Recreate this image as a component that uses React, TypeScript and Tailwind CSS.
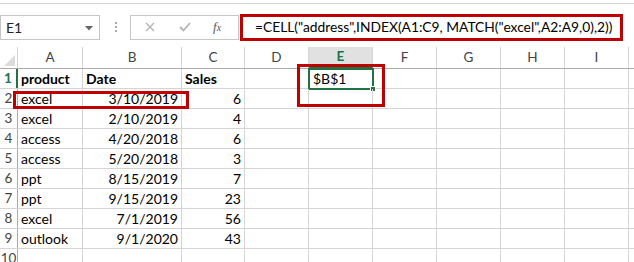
import React from 'react';

const COLS = ['A', 'B', 'C', 'D', 'E', 'F', 'G', 'H', 'I', ''];
const WIDTHS = [65, 99, 63, 64, 64, 64, 64, 64, 64, 40];

type Cell = { v: string; right?: boolean; bold?: boolean };

const DATA: Cell[][] = [
  [{ v: 'product', bold: true }, { v: 'Date', bold: true }, { v: 'Sales', bold: true }],
  [{ v: 'excel' }, { v: '3/10/2019', right: true }, { v: '6', right: true }],
  [{ v: 'excel' }, { v: '2/10/2019', right: true }, { v: '4', right: true }],
  [{ v: 'access' }, { v: '4/20/2018', right: true }, { v: '6', right: true }],
  [{ v: 'access' }, { v: '5/20/2018', right: true }, { v: '3', right: true }],
  [{ v: 'ppt' }, { v: '8/15/2019', right: true }, { v: '7', right: true }],
  [{ v: 'ppt' }, { v: '9/15/2019', right: true }, { v: '23', right: true }],
  [{ v: 'excel' }, { v: '7/1/2019', right: true }, { v: '56', right: true }],
  [{ v: 'outlook' }, { v: '9/1/2020', right: true }, { v: '43', right: true }],
  [],
];

const font = { fontFamily: 'Lato, "Liberation Sans", sans-serif' };

export default function App() {
  return (
    <div className="relative w-[634px] h-[262px] overflow-hidden bg-white text-black" style={font}>
      {/* top strip */}
      <div className="h-[4px] border-b border-[#d5d5d5]" />

      {/* name box + formula bar */}
      <div className="flex items-center h-[26px] mt-[10px]">
        <div className="relative flex items-center w-[100px] h-[25px] border border-[#c6c6c6] pl-[5px] text-[14px] text-[#222]">
          E1
          <svg className="absolute right-[6px] top-[10px]" width="8" height="5" viewBox="0 0 8 5">
            <path d="M0 0 H8 L4 4.5 Z" fill="#666" />
          </svg>
        </div>
        <div className="ml-[15px] flex flex-col gap-[2px]">
          <div className="w-[2px] h-[2px] bg-[#aaa]" />
          <div className="w-[2px] h-[2px] bg-[#aaa]" />
          <div className="w-[2px] h-[2px] bg-[#aaa]" />
        </div>
        <div className="ml-[13px] flex items-center w-[109px] h-[25px] border border-[#c6c6c6]">
          <svg className="ml-[14px]" width="10" height="10" viewBox="0 0 10 10">
            <path d="M1 1 L9 9 M9 1 L1 9" stroke="#b4b4b4" strokeWidth="1.4" />
          </svg>
          <svg className="ml-[24px]" width="12" height="10" viewBox="0 0 12 10">
            <path d="M1 5 L4.5 8.5 L11 1" stroke="#b4b4b4" strokeWidth="1.8" fill="none" />
          </svg>
          <span
            className="ml-[22px] text-[13px] italic text-[#555]"
            style={{ fontFamily: '"Liberation Serif", serif' }}
          >
            f<span className="text-[10px]">x</span>
          </span>
        </div>
        <div className="ml-[1px] flex items-center w-[383px] h-[27px] border-[3px] border-[#c00000] pl-[12px] text-[13.8px] whitespace-nowrap">
          =CELL("address",INDEX(A1:C9, MATCH("excel",A2:A9,0),2))
        </div>
      </div>

      {/* sheet */}
      <div className="mt-[7px]">
        {/* column headers */}
        <div className="flex h-[22px] border-b border-[#ababab]">
          <div className="relative w-[18px] shrink-0 border-r border-[#d4d4d4]">
            <svg className="absolute right-[2px] bottom-[2px]" width="11" height="11" viewBox="0 0 11 11">
              <path d="M11 0 V11 H0 Z" fill="#dcdcdc" />
            </svg>
          </div>
          {COLS.map((c, i) => (
            <div
              key={i}
              className={`shrink-0 flex items-center justify-center border-r border-[#d4d4d4] text-[13.5px] ${
                c === 'E' ? 'bg-[#e1e1e1] text-[#217346] font-bold border-b-2 border-b-[#217346]' : 'text-[#444]'
              }`}
              style={{ width: WIDTHS[i] }}
            >
              {c}
            </div>
          ))}
        </div>

        {/* rows */}
        {DATA.map((row, r) => (
          <div key={r} className="flex h-[20px] border-b border-[#d4d4d4]">
            <div
              className={`w-[18px] shrink-0 flex items-center justify-center text-[13.5px] border-r ${
                r === 0 ? 'text-[#217346] font-bold border-r-2 border-r-[#217346]' : 'text-[#444] border-[#ababab]'
              }`}
            >
              {r + 1}
            </div>
            {COLS.map((_, c) => {
              const cell = row[c];
              const selected = r === 0 && c === 4;
              return (
                <div
                  key={c}
                  className={`relative shrink-0 flex items-center border-r border-[#d4d4d4] px-[3px] text-[14px] whitespace-nowrap ${
                    cell?.right ? 'justify-end' : 'justify-start'
                  } ${cell?.bold ? 'font-bold' : ''}`}
                  style={{ width: WIDTHS[c] }}
                >
                  {selected ? (
                    <>
                      <span className="pl-[1px]">$B$1</span>
                      <div className="absolute -left-[1px] -top-[1px] w-[66px] h-[22px] border-2 border-[#217346]" />
                      <div className="absolute right-[-4px] bottom-[-4px] w-[6px] h-[6px] bg-[#217346] border border-white" />
                    </>
                  ) : (
                    cell?.v
                  )}
                </div>
              );
            })}
          </div>
        ))}
      </div>

      {/* red highlight boxes */}
      <div className="absolute left-[13px] top-[91px] w-[176px] h-[18px] border-[3px] border-[#c00000]" />
      <div className="absolute left-[297px] top-[64px] w-[88px] h-[43px] border-[3px] border-[#c00000]" />
    </div>
  );
}
